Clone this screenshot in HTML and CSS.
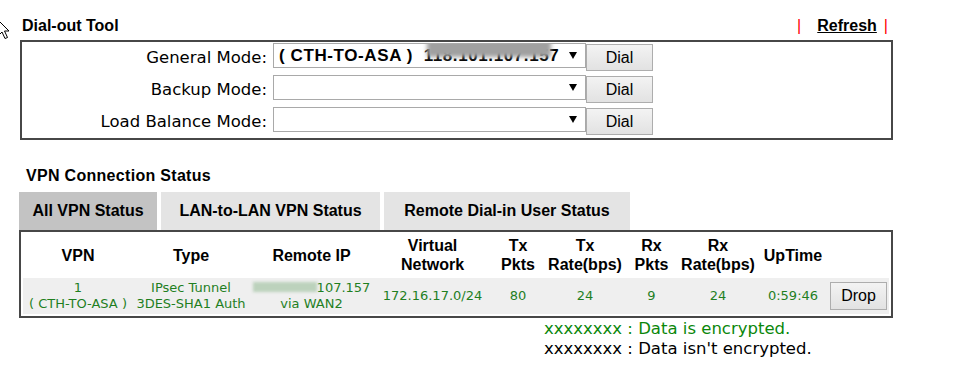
FILE: index.html
```html
<!DOCTYPE html>
<html lang="en">
<head>
    <meta charset="UTF-8">
    <title>Dial-out Tool</title>
    <link rel="stylesheet" href="styles.css">
</head>
<body>
    <div class="page">
        <!-- mouse pointer caught in the screenshot -->
        <svg class="cursor" width="14" height="22" viewBox="0 0 14 22">
            <path d="M1 1 L1 17 L5 13 L8 19.5 L10.5 18.5 L7.5 12 L12 12 Z" fill="#fff" stroke="#000" stroke-width="1"/>
        </svg>

        <div class="title-row">
            <h2 class="title">Dial-out Tool</h2>
            <div class="refresh">
                <span class="bar">|</span>
                <a href="#">Refresh</a>
                <span class="bar">|</span>
            </div>
        </div>

        <div class="dial-box">
            <div class="dial-row">
                <label>General Mode:</label>
                <div class="select">
                    <span class="select-text">( CTH-TO-ASA )&nbsp; 118.101.107.157</span>
                    <span class="smudge"></span>
                    <span class="arrow"></span>
                </div>
                <button class="btn dial">Dial</button>
            </div>
            <div class="dial-row">
                <label>Backup Mode:</label>
                <div class="select">
                    <span class="select-text"></span>
                    <span class="arrow"></span>
                </div>
                <button class="btn dial">Dial</button>
            </div>
            <div class="dial-row">
                <label>Load Balance Mode:</label>
                <div class="select">
                    <span class="select-text"></span>
                    <span class="arrow"></span>
                </div>
                <button class="btn dial">Dial</button>
            </div>
        </div>

        <h2 class="title vpn-title">VPN Connection Status</h2>

        <div class="tabs">
            <div class="tab active tab-all">All VPN Status</div>
            <div class="tab tab-lan">LAN-to-LAN VPN Status</div>
            <div class="tab tab-dial">Remote Dial-in User Status</div>
        </div>

        <div class="status-box">
            <table class="status">
                <colgroup>
                    <col style="width:110px">
                    <col style="width:116px">
                    <col style="width:125px">
                    <col style="width:117px">
                    <col style="width:54px">
                    <col style="width:80px">
                    <col style="width:53px">
                    <col style="width:80px">
                    <col style="width:70px">
                    <col style="width:61px">
                </colgroup>
                <tr class="head">
                    <th>VPN</th>
                    <th>Type</th>
                    <th>Remote IP</th>
                    <th>Virtual<br>Network</th>
                    <th>Tx<br>Pkts</th>
                    <th>Tx<br>Rate(bps)</th>
                    <th>Rx<br>Pkts</th>
                    <th>Rx<br>Rate(bps)</th>
                    <th>UpTime</th>
                    <th></th>
                </tr>
                <tr class="data">
                    <td>1<br>( CTH-TO-ASA )</td>
                    <td>IPsec Tunnel<br>3DES-SHA1 Auth</td>
                    <td><span class="ip-smudge"></span>107.157<br>via WAN2</td>
                    <td>172.16.17.0/24</td>
                    <td>80</td>
                    <td>24</td>
                    <td>9</td>
                    <td>24</td>
                    <td>0:59:46</td>
                    <td class="drop-cell"><button class="btn drop">Drop</button></td>
                </tr>
            </table>
        </div>

        <div class="legend">
            <div class="enc">xxxxxxxx : Data is encrypted.</div>
            <div>xxxxxxxx : Data isn't encrypted.</div>
        </div>
    </div>
</body>
</html>
```

FILE: styles.css
```css
body {
    margin: 0;
    background: #fff;
    color: #000;
    font-family: "DejaVu Sans", Verdana, sans-serif;
}
.page {
    position: relative;
    width: 874px;
    padding: 17px 0 0 19px;
}
.cursor {
    position: absolute;
    left: -3px;
    top: 19px;
}
.title {
    margin: 0;
    font-family: "Liberation Sans", Arial, sans-serif;
    font-size: 16px;
    font-weight: bold;
    line-height: 18px;
}
.title-row {
    display: flex;
    justify-content: space-between;
    align-items: center;
    padding: 0 5px 0 3px;
    margin-bottom: 5px;
}
.refresh {
    display: flex;
    align-items: center;
    font-family: "Liberation Sans", Arial, sans-serif;
    font-size: 16px;
    line-height: 18px;
}
.refresh .bar {
    color: #ff0000;
}
.refresh a {
    color: #000;
    font-weight: bold;
    margin: 0 7px 0 16px;
}
.dial-box {
    margin-left: 1px;
    border: 2px solid #474747;
    padding: 1px 0 3px;
    display: flex;
    flex-direction: column;
    gap: 4px;
}
.dial-row {
    display: flex;
    align-items: flex-start;
    height: 28px;
}
.dial-row label {
    width: 245px;
    text-align: right;
    font-size: 16.5px;
    line-height: 19px;
    padding: 5px 6px 0 0;
}
.select {
    position: relative;
    width: 311px;
    height: 23px;
    border: 1px solid #a9a9a9;
    background: #fff;
    display: flex;
    align-items: center;
    overflow: hidden;
}
.select-text {
    flex: 1;
    padding-left: 5px;
    font-family: "Liberation Sans", Arial, sans-serif;
    font-size: 17px;
    font-weight: bold;
    letter-spacing: 0.6px;
    white-space: nowrap;
    overflow: hidden;
}
.smudge {
    position: absolute;
    left: 153px;
    top: -4px;
    width: 124px;
    height: 17px;
    background: #a0a0a0;
    filter: blur(2px);
}
.arrow {
    width: 0;
    height: 0;
    border-left: 4px solid transparent;
    border-right: 4px solid transparent;
    border-top: 7px solid #000;
    margin: 0 8px 0 4px;
}
.btn {
    font-family: "Liberation Sans", Arial, sans-serif;
    font-size: 16px;
    color: #000;
    background: linear-gradient(#f3f3f3, #e2e2e2);
    border: 1px solid #adadad;
    border-radius: 0;
    padding: 0;
}
.dial {
    width: 67px;
    height: 27px;
    margin-top: 1px;
}
.vpn-title {
    margin: 27px 0 7px 7px;
    letter-spacing: 0.3px;
}
.tabs {
    display: flex;
    gap: 4px;
}
.tab {
    height: 38px;
    line-height: 38px;
    text-align: center;
    font-family: "Liberation Sans", Arial, sans-serif;
    font-size: 16px;
    font-weight: bold;
    background: #e4e4e4;
}
.tab.active {
    background: #c3c3c3;
}
.tab-all { width: 138px; }
.tab-lan { width: 219px; }
.tab-dial { width: 246px; }
.status-box {
    border: 2px solid #474747;
    padding: 0 2px 2px;
}
.status {
    width: 866px;
    table-layout: fixed;
    border-collapse: collapse;
}
.status th {
    height: 46px;
    padding: 0;
    font-family: "Liberation Sans", Arial, sans-serif;
    font-size: 16px;
    line-height: 19px;
    text-align: center;
    vertical-align: middle;
}
.status td {
    height: 36px;
    padding: 0;
    background: #efefef;
    color: #1f7f1f;
    font-size: 13px;
    line-height: 16px;
    text-align: center;
    vertical-align: middle;
    white-space: nowrap;
}
.ip-smudge {
    display: inline-block;
    width: 64px;
    height: 10px;
    background: #bcd2bc;
    filter: blur(1.5px);
}
.drop-cell {
    text-align: left;
}
.drop {
    width: 57px;
    height: 28px;
}
.legend {
    margin: 1px 0 0 525px;
    font-size: 16.5px;
    line-height: 20px;
}
.legend .enc {
    color: #0b870b;
}
```
